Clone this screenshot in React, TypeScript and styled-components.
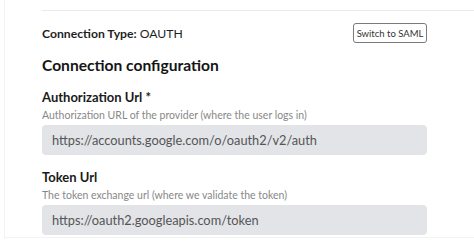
import styled, { createGlobalStyle } from 'styled-components';

const GlobalStyle = createGlobalStyle`
  html, body {
    margin: 0;
    padding: 0;
    background: #ffffff;
  }
  body {
    font-family: Lato, 'Noto Sans', sans-serif;
    color: #1a1a1a;
  }
`;

const Frame = styled.div`
  width: 474px;
  height: 247px;
  box-sizing: border-box;
  padding-left: 4px;
  overflow: hidden;
`;

const Panel = styled.div`
  height: 238px;
  box-sizing: border-box;
  border-left: 1px solid #f3f3f3;
  border-bottom: 1px solid #f3f3f3;
  padding: 10px 0 0 37px;
`;

const Section = styled.section`
  border-top: 1px solid #ebebeb;
  padding-right: 47px;
`;

const TypeRow = styled.div`
  display: flex;
  align-items: center;
  justify-content: space-between;
  height: 20px;
  margin-top: 12px;
`;

const TypeLabel = styled.div`
  font-size: 12.2px;
  color: #1f1f1f;

  strong {
    font-weight: 700;
  }
`;

const SwitchButton = styled.button`
  font-family: Lato, 'Noto Sans', sans-serif;
  font-size: 9.5px;
  color: #333;
  background: #fff;
  border: 1px solid #7a7a7a;
  border-radius: 3px;
  height: 20px;
  width: 74px;
  padding: 0;
  cursor: pointer;
`;

const Heading = styled.h2`
  margin: 12px 0 0;
  font-size: 15.6px;
  font-weight: 700;
  line-height: 20px;
  color: #151515;
`;

const Field = styled.div`
  margin-top: 14px;
`;

const FieldLabel = styled.div`
  font-size: 13px;
  font-weight: 700;
  line-height: 16px;
  color: #1a1a1a;
`;

const FieldHint = styled.div`
  font-size: 10.5px;
  line-height: 14px;
  color: #888;
  margin-top: 3px;
`;

const UrlInput = styled.input`
  display: block;
  width: 100%;
  box-sizing: border-box;
  height: 30px;
  margin-top: 3px;
  padding: 0 10px;
  border: none;
  border-radius: 4px;
  background: #e2e4e8;
  font-family: Lato, 'Noto Sans', sans-serif;
  font-size: 12.8px;
  color: #555;
  outline: none;
`;

const fields = [
  {
    label: 'Authorization Url *',
    hint: 'Authorization URL of the provider (where the user logs in)',
    value: 'https://accounts.google.com/o/oauth2/v2/auth',
  },
  {
    label: 'Token Url',
    hint: 'The token exchange url (where we validate the token)',
    value: 'https://oauth2.googleapis.com/token',
  },
];

export default function App() {
  return (
    <>
      <GlobalStyle />
      <Frame>
        <Panel>
          <Section>
            <TypeRow>
              <TypeLabel>
                <strong>Connection Type:</strong> OAUTH
              </TypeLabel>
              <SwitchButton>Switch to SAML</SwitchButton>
            </TypeRow>
            <Heading>Connection configuration</Heading>
            {fields.map((f) => (
              <Field key={f.label}>
                <FieldLabel>{f.label}</FieldLabel>
                <FieldHint>{f.hint}</FieldHint>
                <UrlInput value={f.value} readOnly />
              </Field>
            ))}
          </Section>
        </Panel>
      </Frame>
    </>
  );
}
